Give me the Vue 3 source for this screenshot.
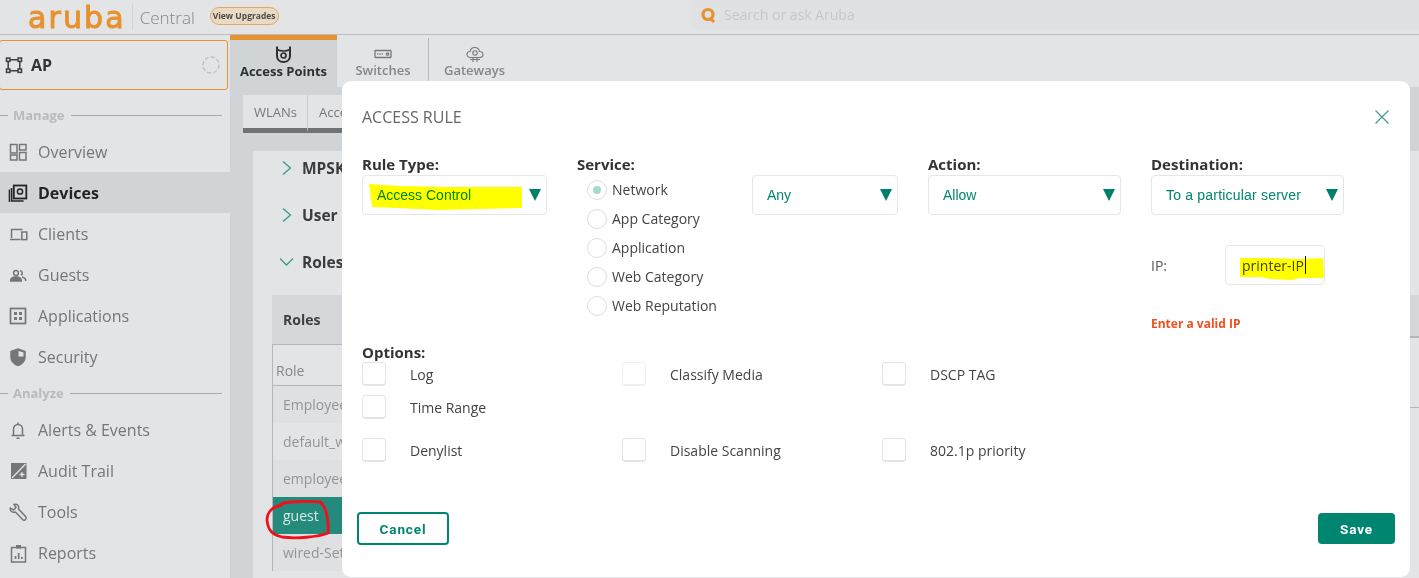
<script setup>
const manage = [
  { label: 'Overview', icon: 'overview' },
  { label: 'Devices', icon: 'devices', active: true },
  { label: 'Clients', icon: 'clients' },
  { label: 'Guests', icon: 'guests' },
  { label: 'Applications', icon: 'apps' },
  { label: 'Security', icon: 'security' },
]
const analyze = [
  { label: 'Alerts & Events', icon: 'alerts' },
  { label: 'Audit Trail', icon: 'audit' },
  { label: 'Tools', icon: 'tools' },
  { label: 'Reports', icon: 'reports' },
]
const roles = [
  { name: 'Employee' },
  { name: 'default_wired' },
  { name: 'employee' },
  { name: 'guest', selected: true },
  { name: 'wired-SetMeUp' },
]
const services = ['Network', 'App Category', 'Application', 'Web Category', 'Web Reputation']
const options = [
  { label: 'Log' },
  { label: 'Classify Media', muted: true },
  { label: 'DSCP TAG' },
  { label: 'Time Range' },
  { label: '', empty: true },
  { label: '', empty: true },
  { label: 'Denylist', low: true },
  { label: 'Disable Scanning', low: true },
  { label: '802.1p priority', low: true },
]
</script>

<template>
  <div class="page">
    <header class="topbar">
      <span class="logo">aruba</span>
      <span class="logo-sep"></span>
      <span class="central">Central</span>
      <span class="upgrade">View Upgrades</span>
      <div class="search">
        <svg class="search-icon" width="16" height="16" viewBox="0 0 16 16" fill="none">
          <circle cx="8" cy="7.5" r="5" stroke="#e8912f" stroke-width="3.2" />
          <path d="M10.5 11.5 L14 15" stroke="#e8912f" stroke-width="3" />
        </svg>
        <span>Search or ask Aruba</span>
      </div>
    </header>

    <div class="body">
      <aside class="sidebar">
        <div class="scope">
          <svg width="18" height="18" viewBox="0 0 18 18" fill="none" stroke="#3d3e40" stroke-width="1.5">
            <rect x="1.5" y="2" width="3.4" height="3.4" />
            <rect x="13.1" y="2" width="3.4" height="3.4" />
            <rect x="1.5" y="13" width="3.4" height="3.4" />
            <rect x="13.1" y="13" width="3.4" height="3.4" />
            <path d="M5 3.7h8M5 14.7h8M3.2 5.5V13M14.8 5.5V13" />
          </svg>
          <span class="scope-name">AP</span>
          <svg class="spinner" width="20" height="20" viewBox="0 0 20 20" fill="none">
            <circle cx="10" cy="10" r="8" stroke="#bcbdbf" stroke-width="1.3" stroke-dasharray="4 2.2" />
          </svg>
        </div>

        <div class="group-label first"><i></i><span>Manage</span><b></b></div>
        <div v-for="item in manage" :key="item.label" class="nav" :class="{ active: item.active }">
          <svg class="nav-icon" width="20" height="20" viewBox="0 0 20 20" fill="none" stroke="currentColor" stroke-width="1.5">
            <template v-if="item.icon === 'overview'">
              <rect x="2.5" y="2.5" width="6.5" height="8.5" />
              <rect x="11.5" y="2.5" width="6.5" height="5.5" />
              <rect x="2.5" y="13" width="6.5" height="5" />
              <rect x="11.5" y="10.5" width="6.5" height="7.5" />
            </template>
            <template v-else-if="item.icon === 'devices'">
              <rect x="5.8" y="2.5" width="12.5" height="13" stroke-width="1.8" />
              <circle cx="12" cy="8.5" r="2.6" />
              <path d="M3.6 5v13h12" stroke-width="1.6" />
              <path d="M1.4 6.5V19" stroke-width="1.4" />
            </template>
            <template v-else-if="item.icon === 'clients'">
              <path d="M3.5 14V5.5h11" />
              <path d="M2 15.5h10.5" />
              <rect x="13.8" y="8" width="5" height="7.6" />
            </template>
            <template v-else-if="item.icon === 'guests'">
              <circle cx="8" cy="8" r="2.4" />
              <path d="M2.6 16c0-2.8 2.4-4 5.4-4s5.4 1.2 5.4 4z" fill="currentColor" />
              <path d="M12 5.7a2.4 2.4 0 0 1 1 4.5" />
              <path d="M14 12c2 .4 3.8 1.5 3.8 4" />
            </template>
            <template v-else-if="item.icon === 'apps'">
              <rect x="2.5" y="2.5" width="15" height="15" stroke-width="1.7" />
              <path d="M6 6h3v3H6zM11 6h3v3h-3zM6 11h3v3H6zM11 11h3v3h-3z" fill="currentColor" stroke="none" />
            </template>
            <template v-else-if="item.icon === 'security'">
              <path d="M10 2 L17 4.5 V10 C17 14 14 17 10 18.5 C6 17 3 14 3 10 V4.5 Z" fill="currentColor" />
              <path d="M10.5 4 L15.5 5.6 V9.5 H10.5 Z" fill="#e3e4e6" stroke="none" />
            </template>
          </svg>
          <span>{{ item.label }}</span>
        </div>

        <div class="group-label"><i></i><span>Analyze</span><b></b></div>
        <div v-for="item in analyze" :key="item.label" class="nav">
          <svg class="nav-icon" width="20" height="20" viewBox="0 0 20 20" fill="none" stroke="currentColor" stroke-width="1.5">
            <template v-if="item.icon === 'alerts'">
              <path d="M5.5 15V9a4.5 4.5 0 0 1 9 0v6" />
              <path d="M3.5 15.5h13M10 2.5v2M8.5 18.2h3" />
            </template>
            <template v-else-if="item.icon === 'audit'">
              <rect x="3" y="2" width="15.5" height="16" fill="currentColor" stroke="none" />
              <path d="M4 17 L17.5 3" stroke="#e3e4e6" stroke-width="1.3" />
              <path d="M14 11v5M11.5 13.5h5" stroke="#e3e4e6" stroke-width="1.3" />
            </template>
            <template v-else-if="item.icon === 'tools'">
              <path d="M2.5 6 L5.5 8 L8 5.5 L6 2.5 C9 1.5 11.5 4 10.5 7 L18 15 C18.5 16 18 17 17 18 C16 18.5 15 18 14.5 17.5 L7.5 10 C4.5 11 1.5 9 2.5 6 Z" />
            </template>
            <template v-else-if="item.icon === 'reports'">
              <rect x="3.5" y="4.5" width="14" height="14.5" />
              <path d="M8 2h5v3.5H8z" fill="currentColor" stroke="none" />
              <path d="M7.5 16v-3M10.7 16v-6M13.9 16v-2" stroke-width="1.7" />
            </template>
          </svg>
          <span>{{ item.label }}</span>
        </div>
      </aside>

      <main class="main">
        <nav class="tabs">
          <div class="tab current">
            <svg width="17" height="17" viewBox="0 0 17 17" fill="none" stroke="#2e2f31" stroke-width="2">
              <path d="M2 0.5v9.5c0 3.5 2.8 6 6.5 6s6.5-2.5 6.5-6V0.5" />
              <path d="M2 3.5c3.5 2 9.5 2 13 0" stroke-width="1.5" />
              <circle cx="8.5" cy="9.5" r="2.5" stroke-width="1.7" />
            </svg>
            <span>Access Points</span>
          </div>
          <div class="tab divided">
            <svg width="18" height="17" viewBox="0 0 18 17" fill="none" stroke="#77787b" stroke-width="1.3">
              <rect x="1" y="4.5" width="16" height="7" rx="0.5" />
              <path d="M3 8h6" stroke-dasharray="1.3 1" stroke-width="1.5" />
              <circle cx="13.5" cy="8" r="1.2" />
            </svg>
            <span>Switches</span>
          </div>
          <div class="tab">
            <svg width="18" height="17" viewBox="0 0 18 17" fill="none" stroke="#77787b" stroke-width="1.1">
              <path d="M4.5 11.5C2 11.5 1 9.8 1 8.5c0-1.8 1.5-3 3-3 .5-2.3 2.5-4 4.8-4 2.4 0 4.3 1.7 4.7 4 1.8 0 3.5 1.2 3.5 3 0 1.5-1.2 3-3.5 3z" />
              <circle cx="9" cy="7" r="2.2" />
              <path d="M7 11.5V16M11 11.5V16M4 13.5h10" />
            </svg>
            <span>Gateways</span>
          </div>
        </nav>

        <div class="subtabs">
          <div class="subtab">WLANs</div>
          <div class="subtab">Access</div>
        </div>

        <section class="panel">
          <div class="sec"><svg width="16" height="14" viewBox="0 0 16 14" fill="none" stroke="#3c9a8d" stroke-width="1.3"><path d="M3 0.5 L10.5 7 L3 13.5" /></svg><span>MPSK</span></div>
          <div class="sec"><svg width="16" height="14" viewBox="0 0 16 14" fill="none" stroke="#3c9a8d" stroke-width="1.3"><path d="M3 0.5 L10.5 7 L3 13.5" /></svg><span>User</span></div>
          <div class="sec"><svg width="16" height="14" viewBox="0 0 16 14" fill="none" stroke="#3c9a8d" stroke-width="1.3"><path d="M0 3.5 L6.5 10 L13 3.5" /></svg><span>Roles</span></div>

          <div class="tables">
            <div class="roles">
              <div class="roles-head">Roles</div>
              <div class="roles-body">
                <div class="roles-col">Role</div>
                <div v-for="r in roles" :key="r.name" class="role" :class="{ selected: r.selected }">{{ r.name }}</div>
              </div>
            </div>
            <div class="detail">
              <div class="detail-head"></div>
              <div class="detail-row"></div>
            </div>
          </div>
        </section>
      </main>
    </div>

    <div class="modal">
      <div class="modal-head">
        <span class="modal-title">ACCESS RULE</span>
        <svg class="close" width="14" height="14" viewBox="0 0 14 14" fill="none" stroke="#3c9a8d" stroke-width="1.1">
          <path d="M0.5 0.5 L13.5 13.5 M13.5 0.5 L0.5 13.5" />
        </svg>
      </div>

      <div class="form">
        <div class="col w185">
          <label class="lbl">Rule Type:</label>
          <div class="select"><span>Access Control</span><i class="arrow"></i></div>
        </div>
        <div class="col w145">
          <label class="lbl">Service:</label>
          <div class="radios">
            <div v-for="(s, i) in services" :key="s" class="radio-row">
              <span class="radio" :class="{ on: i === 0 }"></span>
              <span>{{ s }}</span>
            </div>
          </div>
        </div>
        <div class="col w146">
          <label class="lbl">&nbsp;</label>
          <div class="select"><span>Any</span><i class="arrow"></i></div>
        </div>
        <div class="col w193">
          <label class="lbl">Action:</label>
          <div class="select"><span>Allow</span><i class="arrow"></i></div>
        </div>
        <div class="col w193">
          <label class="lbl">Destination:</label>
          <div class="select"><span class="wide">To a particular server</span><i class="arrow"></i></div>
          <div class="ip-row">
            <span class="ip-label">IP:</span>
            <div class="ip-input"><span class="ip-value">printer-IP</span><i class="caret"></i></div>
          </div>
          <div class="ip-error">Enter a valid IP</div>
        </div>
      </div>

      <label class="lbl opts-lbl">Options:</label>
      <div class="opts">
        <div v-for="(o, i) in options" :key="i" class="opt" :class="{ low: o.low }">
          <template v-if="!o.empty">
            <span class="check" :class="{ muted: o.muted }"></span>
            <span>{{ o.label }}</span>
          </template>
        </div>
      </div>

      <div class="footer">
        <button class="btn cancel">Cancel</button>
        <button class="btn save">Save</button>
      </div>
    </div>

    <svg class="mark multiply" width="1419" height="578" viewBox="0 0 1419 578">
      <path fill="#ffff00" d="M369 184 L400 186 L450 187 L522 187 L522 208 L480 209 L440 210 L395 208 L372 207 Z" />
      <path fill="#ffff00" d="M1240 258 L1270 258 L1300 259 L1323 258 L1324 278 L1300 278 L1292 280 L1270 279 L1260 277 L1240 277 Z" />
    </svg>
    <svg class="mark" width="1419" height="578" viewBox="0 0 1419 578" fill="none">
      <path stroke="#f0101c" stroke-width="2.8" stroke-linecap="round" d="M281 504 C290 501 310 501 320 502 C326 506 329 520 328 533 C318 537 296 539 282 537 C274 535 268 532 267 520 C267 512 273 506 282 505" />
    </svg>
  </div>
</template>

<style>
html, body { margin: 0; overflow: hidden; }
</style>

<style scoped>
.page {
  position: relative;
  width: 1419px;
  height: 578px;
  overflow: hidden;
  background: #e3e4e6;
  font-family: "Open Sans", "Liberation Sans", sans-serif;
  color: #444;
}
.topbar {
  display: flex;
  align-items: center;
  height: 34px;
  border-bottom: 1px solid #bcbdbf;
  box-sizing: content-box;
}
.logo {
  flex: none;
  align-self: flex-start;
  margin-left: 28px;
  font-family: "DejaVu Sans", sans-serif;
  font-size: 30px;
  line-height: normal;
  letter-spacing: 2.1px;
  white-space: nowrap;
  color: #e8912f;
  -webkit-text-stroke: 1px #e8912f;
}
.logo-sep { width: 1px; height: 26px; background: #d3d4d6; margin-left: 6px; }
.central { margin-left: 7px; font-size: 17px; font-weight: 300; color: #85868a; width: 70px; }
.upgrade {
  box-sizing: border-box;
  height: 18px;
  width: 69px;
  margin-top: -3px;
  border: 1px solid #e6a765;
  border-radius: 9px;
  background: #ead9c3;
  font-size: 8.5px;
  line-height: 16px;
  text-align: center;
  font-weight: 700;
  color: #4a4a4a;
  white-space: nowrap;
}
.search {
  margin-left: auto;
  align-self: flex-start;
  width: 728px;
  height: 29px;
  box-sizing: border-box;
  background: #e0e1e3;
  border-radius: 0 0 0 4px;
  display: flex;
  align-items: center;
  padding-left: 9px;
  gap: 8px;
  font-size: 14px;
  color: #c6c7c9;
}
.body { display: flex; height: 543px; }
.sidebar { width: 230px; flex: none; background: #e3e4e6; }
.scope {
  box-sizing: border-box;
  display: flex;
  align-items: center;
  width: 229px;
  height: 50px;
  margin: 5px 0 0 -1px;
  padding: 0 6px 0 5px;
  border: 1px solid #e8912f;
  border-radius: 3px;
  font-weight: 700;
  font-size: 16px;
  color: #333;
}
.scope-name { margin-left: 8px; }
.spinner { margin-left: auto; }
.group-label {
  display: flex;
  align-items: center;
  height: 18px;
  margin: 7px 8px 7px 0;
  font-size: 13px;
  font-weight: 700;
  color: #b9babd;
}
.group-label.first { margin-top: 16px; }
.group-label i { width: 8px; height: 1px; background: #a9aaac; margin-right: 5px; }
.group-label b { flex: 1; height: 1px; background: #a9aaac; margin-left: 6px; }
.nav {
  display: flex;
  align-items: center;
  height: 41px;
  padding-left: 8px;
  gap: 10px;
  font-size: 16px;
  color: #75767a;
}
.nav.active { background: #d1d4d7; color: #232426; font-weight: 700; }
.nav-icon { flex: none; }
.main { flex: 1; min-width: 0; background: #d1d4d7; }
.tabs { display: flex; height: 52px; background: #e3e4e6; }
.tab {
  box-sizing: border-box;
  display: flex;
  flex-direction: column;
  align-items: center;
  width: 91px;
  height: 46px;
  margin-top: 3px;
  padding-top: 8px;
  font-size: 13px;
  line-height: 15px;
  font-weight: 600;
  color: #85868a;
}
.tab.divided { border-right: 1px solid #b9babc; width: 92px; padding-left: 1px; }
.tab.current {
  width: 107px;
  height: 52px;
  margin-top: 0;
  padding-top: 6px;
  border-top: 5px solid #e8912f;
  background: #d1d4d7;
  color: #2e2f31;
  font-weight: 700;
}
.tab.current svg { margin-bottom: 1px; }
.subtabs { display: flex; padding: 8px 0 0 13px; height: 38px; box-sizing: content-box; }
.subtab {
  box-sizing: border-box;
  height: 38px;
  padding: 8px 10px 0 11px;
  background: #e3e4e6;
  border-bottom: 5px solid #717275;
  border-right: 1px solid #c9cacc;
  font-size: 13px;
  line-height: 18px;
  color: #77787c;
}
.panel {
  margin: 18px 0 0 23px;
  height: 427px;
  background: #e3e4e6;
}
.sec {
  display: flex;
  align-items: center;
  height: 34px;
  margin-bottom: 13px;
  padding-left: 27px;
  gap: 6px;
  font-size: 15.5px;
  font-weight: 700;
  color: #3a3b3d;
}
.tables { display: flex; margin-top: 16px; }
.roles { width: 500px; margin-left: 19px; flex: none; }
.roles-head {
  box-sizing: border-box;
  height: 50px;
  padding: 15px 11px;
  background: #d5d7db;
  font-size: 14px;
  line-height: 20px;
  font-weight: 700;
  color: #3f4042;
  border-bottom: 1px solid #b5b6b8;
}
.roles-body { border-left: 1px solid #b5b6b8; border-bottom: 1px solid #b5b6b8; height: 226px; box-sizing: border-box; }
.roles-col {
  box-sizing: border-box;
  height: 41px;
  padding: 16px 3px 0;
  line-height: 20px;
  font-size: 14px;
  color: #86878b;
  border-bottom: 1px solid #b5b6b8;
}
.role {
  height: 37px;
  padding-left: 10px;
  line-height: 37px;
  font-size: 14px;
  color: #939497;
  background: #dfe0e2;
  white-space: nowrap;
}
.role:nth-child(odd) { background: #e3e4e6; }
.role.selected { background: #248a7b; color: #d8ebe7; }
.detail { flex: 1; margin-left: 20px; }
.detail-head { height: 41px; background: #d5d7db; border-bottom: 2px solid #b5b6b8; }
.detail-row { height: 69px; border-bottom: 1px solid #b5b6b8; }

.modal {
  position: absolute;
  left: 342px;
  top: 81px;
  width: 1068px;
  height: 496px;
  box-sizing: border-box;
  padding: 25px 15px 0 20px;
  background: #fff;
  border-radius: 9px;
}
.modal-head { display: flex; align-items: center; justify-content: space-between; height: 22px; }
.modal-title { font-size: 16px; line-height: 22px; color: #666; }
.close { margin-right: 6px; }
.form { display: flex; gap: 30px; margin-top: 27px; height: 175px; }
.w185 { width: 185px; }
.w145 { width: 145px; }
.w146 { width: 146px; }
.w193 { width: 193px; }
.col { flex: none; }
.lbl { display: block; font-size: 15px; line-height: 18px; font-weight: 700; color: #333; }
.select {
  box-sizing: border-box;
  display: flex;
  align-items: center;
  justify-content: space-between;
  height: 40px;
  margin-top: 2px;
  padding: 0 5px 0 14px;
  border: 1px solid #e6e6e6;
  border-radius: 4px;
  font-family: "Liberation Sans", Arial, sans-serif;
  font-size: 14px;
  color: #00856f;
  white-space: nowrap;
}
.wide { letter-spacing: 0.2px; }
.arrow {
  width: 0;
  height: 0;
  border-left: 6px solid transparent;
  border-right: 6px solid transparent;
  border-top: 12px solid #00806c;
  flex: none;
}
.radios { margin-top: 2px; }
.radio-row { display: flex; align-items: center; height: 29px; padding-left: 10px; gap: 5px; font-size: 14px; color: #444; }
.radio {
  box-sizing: border-box;
  width: 20px;
  height: 20px;
  border: 1px solid #dedede;
  border-radius: 50%;
  display: inline-flex;
  align-items: center;
  justify-content: center;
}
.radio.on::after { content: ""; width: 8px; height: 8px; border-radius: 50%; background: #a6d8cd; }
.ip-row { display: flex; align-items: center; margin-top: 30px; font-size: 14px; color: #555; }
.ip-label { width: 74px; }
.ip-input {
  box-sizing: border-box;
  width: 100px;
  height: 40px;
  padding-left: 16px;
  border: 1px solid #e6e6e6;
  border-radius: 4px;
  display: flex;
  align-items: center;
}
.ip-value { color: #444; }
.caret { width: 1px; height: 18px; background: #111; margin-left: 1px; }
.ip-error { margin-top: 32px; font-size: 12px; line-height: 14px; font-weight: 700; color: #f0501e; white-space: nowrap; }
.opts-lbl { margin-top: 13px; }
.opts {
  display: grid;
  grid-template-columns: repeat(3, 260px);
  row-gap: 9px;
  margin-top: 1px;
  font-size: 14px;
  color: #444;
}
.opt { display: flex; align-items: center; height: 24px; gap: 24px; }
.opt.low { margin-top: 10px; }
.check {
  box-sizing: border-box;
  width: 24px;
  height: 24px;
  border: 1px solid #e4e4e4;
  border-bottom: 2px solid #e4e4e4;
  border-radius: 4px;
  flex: none;
}
.check.muted { border-color: #f0f0f0; }
.footer { display: flex; justify-content: space-between; align-items: flex-start; margin: 50px 0 0 -5px; }
.btn {
  box-sizing: border-box;
  font-family: Roboto, "Liberation Sans", sans-serif;
  font-size: 13.5px;
  font-weight: 700;
  letter-spacing: 0.9px;
  border-radius: 4px;
  padding: 0;
  cursor: pointer;
}
.cancel { width: 92px; height: 33px; background: #fff; border: 2px solid #00856f; color: #00856f; }
.save { width: 77px; height: 31px; margin-top: 1px; background: #008571; border: none; color: #fff; }
.mark { position: absolute; left: 0; top: 0; pointer-events: none; }
.multiply { mix-blend-mode: multiply; }
</style>
